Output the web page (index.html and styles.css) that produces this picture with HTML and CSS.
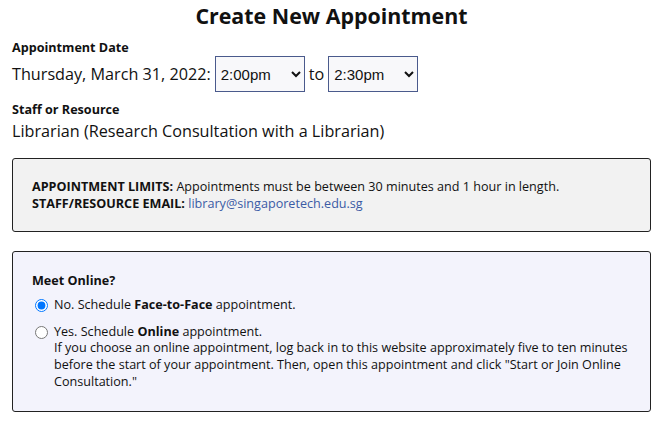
FILE: index.html
```html
<!DOCTYPE html>
<html>
<head>
<meta charset="utf-8">
<link rel="stylesheet" href="styles.css">
</head>
<body>
<h1 class="title">Create New Appointment</h1>
<div class="field">
  <div class="label">Appointment Date</div>
  <div class="date-row">
    <span class="value">Thursday, March 31, 2022:</span>
    <select class="time"><option>2:00pm</option></select>
    <span class="value">to</span>
    <select class="time"><option>2:30pm</option></select>
  </div>
</div>
<div class="field">
  <div class="label">Staff or Resource</div>
  <div class="value">Librarian (Research Consultation with a Librarian)</div>
</div>
<div class="box limits">
  <div><b>APPOINTMENT LIMITS:</b> Appointments must be between 30 minutes and 1 hour in length.</div>
  <div><b>STAFF/RESOURCE EMAIL:</b> <a class="mail" href="#">library@singaporetech.edu.sg</a></div>
</div>
<div class="box online">
  <div class="q">Meet Online?</div>
  <label class="opt"><input type="radio" name="m" checked><span>No. Schedule <b>Face-to-Face</b> appointment.</span></label>
  <label class="opt"><input type="radio" name="m"><span>Yes. Schedule <b>Online</b> appointment.<br>If you choose an online appointment, log back in to this website approximately five to ten minutes before the start of your appointment. Then, open this appointment and click "Start or Join Online Consultation."</span></label>
</div>
</body>
</html>
```
FILE: styles.css
```css
body {
  margin: 0;
  padding: 0 14px 0 12px;
  font-family: "Open Sans", sans-serif;
  color: #111;
  background: #fff;
}
.title {
  margin: 2px 0 0;
  text-align: center;
  font-size: 21.4px;
  font-weight: 700;
  line-height: 28px;
}
.field { margin-top: 9px; }
.field + .field { margin-top: 9px; }
.label {
  font-size: 12.6px;
  font-weight: 700;
  line-height: 18px;
}
.value {
  font-size: 16.2px;
  line-height: 22px;
}
.field .label + .value { margin-top: 1px; }
.date-row {
  display: flex;
  align-items: center;
  gap: 4px;
  margin-top: -1px;
}
.date-row .value { margin-top: 0; }
.time {
  width: 90px;
  height: 36px;
  font-family: "Liberation Sans", Arial, sans-serif;
  font-size: 15px;
  border: 1px solid #4a5a8c;
  background: #f8f8fa;
  color: #111;
  border-radius: 0;
  padding: 0 1px;
}
.box {
  border: 1px solid #222;
  border-radius: 3px;
  font-size: 12.6px;
  line-height: 17px;
}
.limits {
  margin-top: 16px;
  background: #f2f2f2;
  padding: 19px 19px 19px;
}
.mail { color: #3b5ba5; text-decoration: none; }
.online {
  margin-top: 19px;
  background: #f3f3fc;
  padding: 21px 19px 20px;
  line-height: 16.8px;
}
.q { font-weight: 700; margin-bottom: 7px; }
.opt {
  display: flex;
  align-items: flex-start;
  gap: 6px;
  margin-bottom: 10px;
  padding-left: 3px;
}
.opt:last-child { margin-bottom: 0; }
.opt input { margin: 2px 0 0; width: 13px; height: 13px; }
```
